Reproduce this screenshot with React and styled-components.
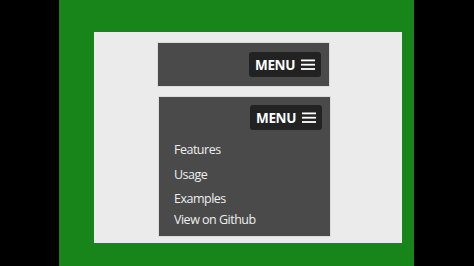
import React from 'react';
import styled, { createGlobalStyle } from 'styled-components';

const Global = createGlobalStyle`
    html, body {
        margin: 0;
        padding: 0;
        background: #000;
    }
    body {
        font-family: "Open Sans", "Noto Sans", sans-serif;
    }
`;

const S = {
    Page: styled.div`
        width: 474px;
        height: 266px;
        display: flex;
        padding-left: 59px;
        box-sizing: border-box;
    `,
    Green: styled.div`
        width: 355px;
        height: 266px;
        background: #178519;
        padding: 32px 0 0 35px;
        box-sizing: border-box;
    `,
    Sheet: styled.div`
        width: 308px;
        height: 211px;
        background: #ebebeb;
        padding: 11px 0 0 64px;
        box-sizing: border-box;
        display: flex;
        flex-direction: column;
        gap: 11px;
    `,
    Bar: styled.div`
        width: 171px;
        height: ${(p) => p.h}px;
        margin-left: ${(p) => p.shift || 0}px;
        background: #4a4a4a;
        box-shadow: 0 0 0 1px #dcdcdc;
        padding: ${(p) => p.top}px 8px 0 0;
        box-sizing: border-box;
        display: flex;
        flex-direction: column;
        align-items: flex-end;
    `,
    MenuButton: styled.div`
        width: 72px;
        height: 25px;
        background: #222;
        border-radius: 3px;
        display: flex;
        align-items: center;
        justify-content: center;
        gap: 6px;
        color: #fff;
        font-size: 13.5px;
        font-weight: 700;
        letter-spacing: -0.4px;
    `,
    Links: styled.ul`
        list-style: none;
        margin: 11px 0 0;
        padding: 0 0 0 15px;
        align-self: stretch;
    `,
    Link: styled.li`
        color: #eee;
        font-size: 12.5px;
        letter-spacing: -0.5px;
        line-height: 17px;
        margin-bottom: ${(p) => (p.tight ? 4 : 7.5)}px;
    `,
};

const Burger = () => (
    <svg width="14" height="11" viewBox="0 0 14 11">
        <rect x="0" y="0.5" width="14" height="1.8" fill="#fff" />
        <rect x="0" y="4.8" width="14" height="1.8" fill="#fff" />
        <rect x="0" y="9.1" width="14" height="1.8" fill="#fff" />
    </svg>
);

const Menu = () => (
    <S.MenuButton>
        <span>MENU</span>
        <Burger />
    </S.MenuButton>
);

const links = ['Features', 'Usage', 'Examples', 'View on Github'];

const App = () => (
    <>
        <Global />
        <S.Page>
            <S.Green>
                <S.Sheet>
                    <S.Bar h={43} top={9}>
                        <Menu />
                    </S.Bar>
                    <S.Bar h={139} top={8} shift={1}>
                        <Menu />
                        <S.Links>
                            {links.map((l, i) => (
                                <S.Link key={l} tight={i === 2}>{l}</S.Link>
                            ))}
                        </S.Links>
                    </S.Bar>
                </S.Sheet>
            </S.Green>
        </S.Page>
    </>
);

export default App;
